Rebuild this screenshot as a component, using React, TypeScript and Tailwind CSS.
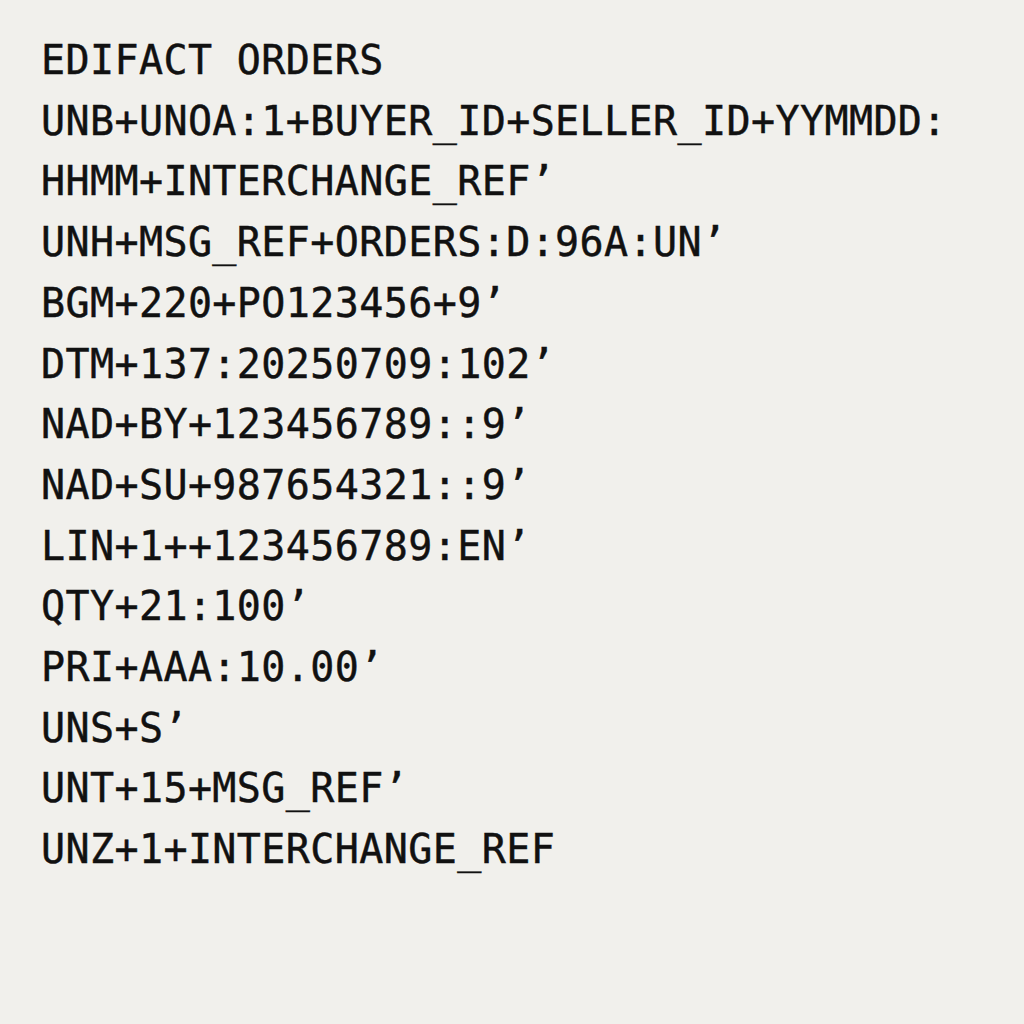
export default function App() {
  const lines = [
    "EDIFACT ORDERS",
    "UNB+UNOA:1+BUYER_ID+SELLER_ID+YYMMDD:",
    "HHMM+INTERCHANGE_REF'",
    "UNH+MSG_REF+ORDERS:D:96A:UN'",
    "BGM+220+PO123456+9'",
    "DTM+137:20250709:102'",
    "NAD+BY+123456789::9'",
    "NAD+SU+987654321::9'",
    "LIN+1++123456789:EN'",
    "QTY+21:100'",
    "PRI+AAA:10.00'",
    "UNS+S'",
    "UNT+15+MSG_REF'",
    "UNZ+1+INTERCHANGE_REF",
  ];
  return (
    <div className="w-[1024px] h-[1024px] bg-[#f1f0ec] pl-[41px] pt-[30px] overflow-hidden">
      <div className="flex flex-col text-[40px] leading-[60.7px] tracking-[0.4px] text-[#111111] font-['DejaVu_Sans_Mono',monospace] whitespace-pre [-webkit-text-stroke:0.45px_#111111]">
        {lines.map((l, i) => (
          <div key={i}>{l.replace(/'/g, "\u2019")}</div>
        ))}
      </div>
    </div>
  );
}
